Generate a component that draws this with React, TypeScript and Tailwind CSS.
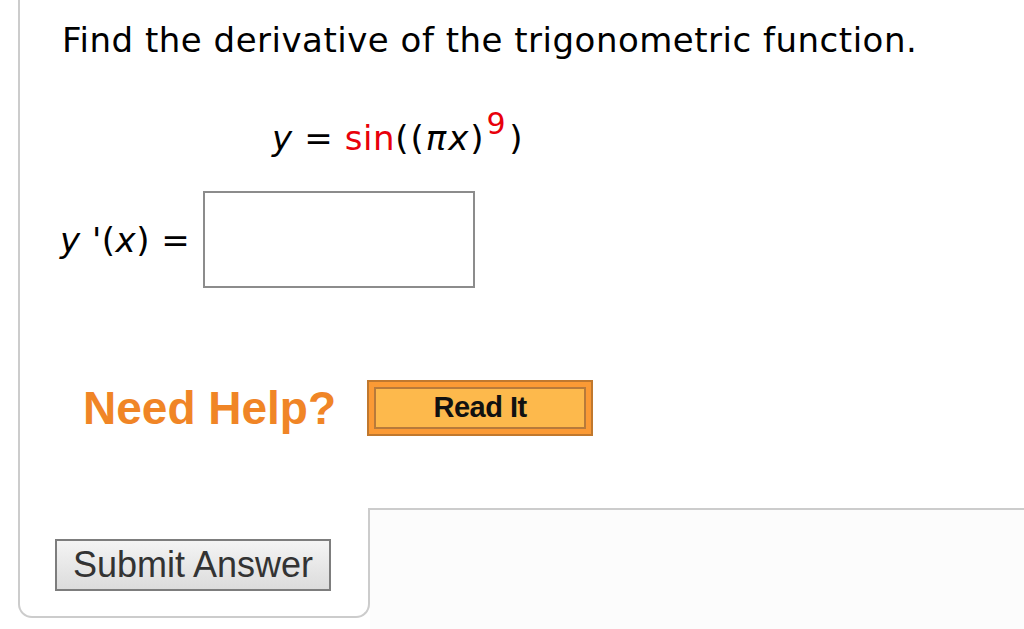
export default function App() {
  return (
    <div className="h-[629px] w-[1024px] overflow-hidden bg-white" style={{ fontFamily: 'Verdana, "DejaVu Sans", sans-serif' }}>
      <div className="ml-[18px] flex h-[508px] flex-col border-l-2 border-[#cccccc]">
        <p className="pl-[42px] pt-[17px] text-[34px] leading-[46px] tracking-[0.5px] text-black">
          Find the derivative of the trigonometric function.
        </p>
        <div className="mt-[52px] pl-[252px] text-[34px] leading-[46px] tracking-[0.6px] text-black">
          <i>y</i> = <span className="text-[#e8000b]">sin</span>
          <span className="tracking-[2px]">((<i>πx</i>)</span>
          <sup className="relative -top-[16px] ml-[1px] mr-[3px] text-[30px] text-[#e8000b]">9</sup>)
        </div>
        <div className="mt-[30px] flex items-center pl-[40px]">
          <span className="text-[34px] leading-[46px] tracking-[0.5px] text-black">
            <i>y</i> '(<i>x</i>) =
          </span>
          <div className="ml-[13px] h-[97px] w-[272px] border-2 border-[#8c8c8c] bg-white" />
        </div>
        <div className="mt-[92px] flex items-center pl-[63px]">
          <span className="text-[46px] font-bold leading-[56px] text-[#f08526]" style={{ fontFamily: '"Liberation Sans", Arial, sans-serif' }}>
            Need Help?
          </span>
          <button
            type="button"
            className="ml-[31px] h-[56px] w-[226px] border-2 border-[#c0782e] bg-[#fb9a35] p-[5px]"
          >
            <div
              className="flex h-full w-full items-center justify-center border-2 border-[#b87a3a] bg-[#fdb94c] text-[29px] font-bold tracking-[-0.5px] text-[#111]"
              style={{ fontFamily: '"Liberation Sans", Arial, sans-serif' }}
            >
              Read It
            </div>
          </button>
        </div>
      </div>
      <div className="flex h-[121px]">
        <div className="ml-[18px] flex h-[110px] w-[352px] items-start rounded-b-[14px] border-x-2 border-b-2 border-[#cccccc] pl-[35px] pt-[31px]">
          <button
            type="button"
            className="h-[52px] w-[276px] border-2 border-[#7d7d7d] bg-gradient-to-b from-[#f4f4f4] to-[#dcdcdc] text-[36px] leading-[44px] text-[#333]"
            style={{ fontFamily: '"Liberation Sans", Arial, sans-serif' }}
          >
            Submit Answer
          </button>
        </div>
        <div className="flex-1 border-t-2 border-[#cccccc] bg-[#fcfcfc]" />
      </div>
    </div>
  )
}
